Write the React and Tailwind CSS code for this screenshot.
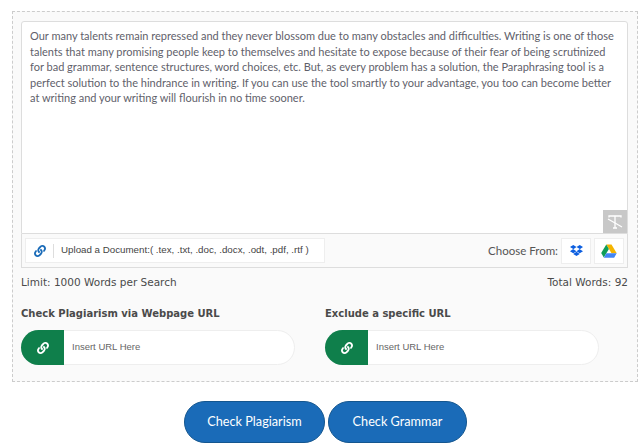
import React from 'react';
import { FaLink, FaDropbox } from 'react-icons/fa';

const sample =
  'Our many talents remain repressed and they never blossom due to many obstacles and difficulties. Writing is one of those talents that many promising people keep to themselves and hesitate to expose because of their fear of being scrutinized for bad grammar, sentence structures, word choices, etc. But, as every problem has a solution, the Paraphrasing tool is a perfect solution to the hindrance in writing. If you can use the tool smartly to your advantage, you too can become better at writing and your writing will flourish in no time sooner.';

function DriveIcon() {
  return (
    <svg width="16" height="14" viewBox="0 0 16 14">
      <path d="M5.3 0.5h5.2l5.2 8.8h-5.2z" fill="#f4b400" />
      <path d="M5.3 0.5l2.6 4.5L2.8 13.5.2 9z" fill="#0f9d58" />
      <path d="M5.4 9.3h10.3l-2.6 4.4H2.8z" fill="#4285f4" />
    </svg>
  );
}

function UrlField({ label }) {
  return (
    <div className="w-[274px]">
      <div className="h-[14px] font-['DejaVu_Sans'] text-[10px] font-bold leading-[14px] text-[#4a4a4a]">{label}</div>
      <div className="mt-[9px] flex h-[35px] rounded-full border border-[#eeeeee] bg-white">
        <div className="-my-px -ml-px flex h-[35px] w-[43px] items-center justify-center rounded-l-full bg-[#0f7f4b] text-white">
          <FaLink className="h-[12px] w-[12px]" />
        </div>
        <span className="ml-[8px] self-center font-['Liberation_Sans'] text-[9.5px] text-[#666666]">Insert URL Here</span>
      </div>
    </div>
  );
}

export default function App() {
  return (
    <div className="h-[445px] w-[640px] overflow-hidden bg-white pl-[12px] pt-[11px]">
      <div className="flex h-[371px] w-[626px] flex-col border border-dashed border-[#cccccc] bg-[#fafafa] pl-[8px] pr-[9px] pt-[9px]">
        {/* Text area */}
        <div className="relative h-[213px] rounded-t-[3px] border border-[#dddddd] bg-white pl-[8px] pr-[6px] pt-[6px]">
          <p className="font-['Lato'] text-[11px] leading-[15.5px] text-[#5f5f6b]">{sample}</p>
          <div className="absolute bottom-0 right-0 flex h-[23px] w-[24px] items-center justify-center bg-[#c8c8c8]">
            <svg width="18" height="16" viewBox="0 0 18 16" fill="none" stroke="#ffffff">
              <path d="M3 3.5V2h12v1.5M9 2v12M7 14h4" strokeWidth="1.3" />
              <path d="M2 5l14 8" strokeWidth="1.2" />
            </svg>
          </div>
        </div>

        {/* Upload bar */}
        <div className="flex h-[34px] items-center justify-between border border-t-0 border-[#dddddd] pl-[3px] pr-[3px]">
          <div className="flex h-[25px] w-[300px] items-center border border-[#eeeeee] bg-white">
            <div className="flex h-[14px] w-[28px] items-center justify-center border-r border-[#dddddd] text-[#1a6bb8]">
              <FaLink className="h-[12px] w-[12px]" />
            </div>
            <span className="ml-[7px] font-['Liberation_Sans'] text-[9.75px] text-[#444444]">Upload a Document:( .tex, .txt, .doc, .docx, .odt, .pdf, .rtf )</span>
          </div>
          <div className="flex items-center">
            <span className="mr-[3px] font-['Lato'] text-[11.5px] text-[#555555]">Choose From:</span>
            <div className="flex h-[26px] w-[30px] items-center justify-center border border-[#eeeeee] bg-white text-[#0d5fe0]">
              <FaDropbox className="h-[13px] w-[13px]" />
            </div>
            <div className="ml-[3px] flex h-[26px] w-[30px] items-center justify-center border border-[#eeeeee] bg-white">
              <DriveIcon />
            </div>
          </div>
        </div>

        <div className="mt-[7px] flex justify-between font-['DejaVu_Sans'] text-[10.5px] leading-[14px] text-[#4a4a4a]">
          <span>Limit: 1000 Words per Search</span>
          <span>Total Words: 92</span>
        </div>

        <div className="mt-[18px] flex gap-[30px]">
          <UrlField label="Check Plagiarism via Webpage URL" />
          <UrlField label="Exclude a specific URL" />
        </div>
      </div>

      <div className="-ml-[12px] mt-[19px] flex justify-center gap-[3px] pl-[11px]">
        <button className="h-[42px] w-[141px] rounded-[21px] border border-[#14568f] bg-[#1a6bb8] font-['Lato'] text-[12.7px] text-white">Check Plagiarism</button>
        <button className="h-[42px] w-[139px] rounded-[21px] border border-[#14568f] bg-[#1a6bb8] font-['Lato'] text-[12.7px] text-white">Check Grammar</button>
      </div>
    </div>
  );
}
